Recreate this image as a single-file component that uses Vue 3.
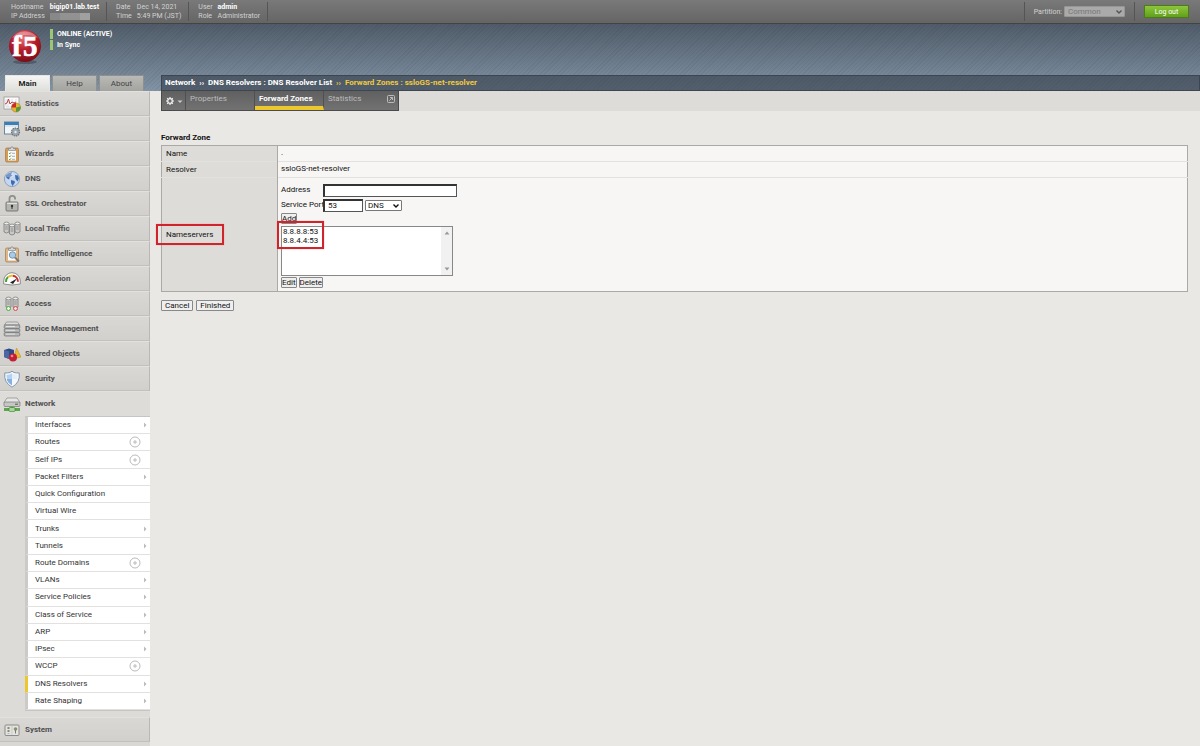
<template>
    <div class="page">
        <div class="top-bar">
            <dl class="info">
                <dt>Hostname</dt>
                <dd class="strong">bigip01.lab.test</dd>
                <dt>IP Address</dt>
                <dd class="masked"></dd>
            </dl>
            <dl class="info">
                <dt>Date</dt>
                <dd>Dec 14, 2021</dd>
                <dt>Time</dt>
                <dd>5:49 PM (JST)</dd>
            </dl>
            <dl class="info">
                <dt>User</dt>
                <dd class="strong">admin</dd>
                <dt>Role</dt>
                <dd>Administrator</dd>
            </dl>
            <div class="partition">
                <label for="partition">Partition:</label>
                <div class="picker">
                    <select id="partition" v-model="partition" disabled>
                        <option>Common</option>
                    </select>
                    <svg class="caret" viewBox="0 0 8 6"><path d="M1.5 1.5 4 4 6.5 1.5" /></svg>
                </div>
            </div>
            <div class="session">
                <button class="logout">Log out</button>
            </div>
        </div>

        <header class="banner">
            <div class="brand">
                <div class="identity">
                    <svg class="logo" viewBox="0 0 34 36">
                        <defs>
                            <radialGradient id="ball" cx="45%" cy="25%" r="75%">
                                <stop offset="0" stop-color="#e8707a" />
                                <stop offset="0.5" stop-color="#b81e2c" />
                                <stop offset="1" stop-color="#7c0c18" />
                            </radialGradient>
                        </defs>
                        <ellipse cx="17" cy="33" rx="12" ry="2" fill="#3d4854" opacity="0.6" />
                        <circle cx="17" cy="17" r="16" fill="url(#ball)" />
                        <path d="M4 9a16 16 0 0 1 26 0q-13-6-26 0z" fill="#fff" opacity="0.35" />
                        <text x="4" y="27">f</text>
                        <text x="15" y="27">5</text>
                    </svg>
                    <div class="status">
                        <span>ONLINE (ACTIVE)</span>
                        <span>In Sync</span>
                    </div>
                </div>
                <div class="side-tabs">
                    <button v-for="tab in sideTabs" :key="tab" :class="{ current: tab === sideTab }"
                        @click="sideTab = tab">{{ tab }}</button>
                </div>
            </div>
            <nav class="breadcrumb">
                <a href="#">Network</a>
                <i>››</i>
                <a href="#">DNS Resolvers : DNS Resolver List</a>
                <i class="here">››</i>
                <span class="here">Forward Zones : ssloGS-net-resolver</span>
            </nav>
        </header>

        <div class="body">
            <nav class="sidebar">
                <template v-for="item in menu" :key="item.name">
                    <a href="#" class="menu-item" :class="{ open: item.name === 'Network', last: item.name === 'System' }">
                        <svg class="menu-icon" viewBox="0 0 18 18" v-html="item.icon"></svg>
                        {{ item.name }}
                    </a>
                    <ul v-if="item.name === 'Network'" class="submenu">
                        <li v-for="sub in networkMenu" :key="sub.name" :class="{ selected: sub.name === 'DNS Resolvers' }">
                            <a href="#">{{ sub.name }}</a>
                            <svg v-if="sub.mark === 'plus'" class="plus" viewBox="0 0 12 12">
                                <circle cx="6" cy="6" r="5" />
                                <path d="M4 6h4M6 4v4" />
                            </svg>
                            <svg v-else-if="sub.mark === 'more'" class="more" viewBox="0 0 4 6">
                                <path d="M1 0.5l2.5 2.5-2.5 2.5z" />
                            </svg>
                        </li>
                    </ul>
                </template>
                <div class="sidebar-end"></div>
            </nav>

            <main class="content">
                <div class="tab-strip">
                    <div class="tabs">
                        <button class="gear" aria-label="Options">
                            <svg viewBox="0 0 18 10">
                                <g stroke="#f2f2f2" fill="none">
                                    <circle cx="5" cy="5" r="2.3" stroke-width="1.3" />
                                    <path stroke-width="1.2"
                                        d="M5 1v1.4M5 7.6V9M1 5h1.4M7.6 5H9M2.2 2.2l1 1M6.8 6.8l1 1M2.2 7.8l1-1M6.8 3.2l1-1" />
                                </g>
                                <path d="M12.5 4.5h5L15 7z" fill="#ccc" />
                            </svg>
                        </button>
                        <a href="#" class="tab">Properties</a>
                        <a href="#" class="tab active">Forward Zones</a>
                        <a href="#" class="tab stats">
                            Statistics
                            <svg viewBox="0 0 8 8">
                                <rect x="0.5" y="0.5" width="7" height="7" rx="1" />
                                <path d="M2.3 5.7l3-3M3 2.5h2.5V5" />
                            </svg>
                        </a>
                    </div>
                </div>

                <form class="zone" @submit.prevent>
                    <h1>Forward Zone</h1>
                    <table>
                        <tbody>
                            <tr>
                                <th scope="row">Name</th>
                                <td>.</td>
                            </tr>
                            <tr>
                                <th scope="row">Resolver</th>
                                <td>ssloGS-net-resolver</td>
                            </tr>
                            <tr>
                                <th scope="row">
                                    <span class="anchor">Nameservers<span class="highlight name-mark"></span></span>
                                </th>
                                <td class="servers">
                                    <div class="field">
                                        <label for="address">Address</label>
                                        <input id="address" v-model="address" type="text" class="address">
                                    </div>
                                    <div class="field">
                                        <label for="port">Service Port</label>
                                        <input id="port" v-model="port" type="text" class="port">
                                        <div class="picker service">
                                            <select v-model="service" aria-label="Service">
                                                <option>DNS</option>
                                            </select>
                                            <svg class="caret" viewBox="0 0 8 6"><path d="M1.5 1.5 4 4 6.5 1.5" /></svg>
                                        </div>
                                    </div>
                                    <div class="actions">
                                        <button type="button" @click="addServer">Add</button>
                                    </div>
                                    <div class="list-box">
                                        <select v-model="picked" multiple size="4" aria-label="Nameservers">
                                            <option v-for="server in servers" :key="server">{{ server }}</option>
                                        </select>
                                        <div class="scroll-track">
                                            <svg viewBox="0 0 6 4"><path d="M0.5 3.5l2.5-3 2.5 3z" /></svg>
                                            <svg viewBox="0 0 6 4"><path d="M0.5 0.5l2.5 3 2.5-3z" /></svg>
                                        </div>
                                        <span class="highlight server-mark"></span>
                                    </div>
                                    <div class="actions">
                                        <button type="button" @click="editServer">Edit</button>
                                        <button type="button" @click="deleteServers">Delete</button>
                                    </div>
                                </td>
                            </tr>
                        </tbody>
                    </table>
                    <div class="form-buttons">
                        <button type="button">Cancel</button>
                        <button type="submit">Finished</button>
                    </div>
                </form>
            </main>
        </div>
    </div>
</template>

<script setup>
import { ref } from "vue";

const partition = ref("Common");
const sideTabs = ["Main", "Help", "About"];
const sideTab = ref("Main");

const address = ref("");
const port = ref("53");
const service = ref("DNS");
const servers = ref(["8.8.8.8:53", "8.8.4.4:53"]);
const picked = ref([]);

const addServer = () => {
    if (!address.value) return;
    servers.value.push(`${address.value}:${port.value}`);
    address.value = "";
};

const deleteServers = () => {
    servers.value = servers.value.filter((s) => !picked.value.includes(s));
    picked.value = [];
};

const editServer = () => {
    if (!picked.value.length) return;
    [address.value, port.value] = picked.value[0].split(":");
    deleteServers();
};

// One server can, reused by the Local Traffic and Access icons
const can = (x, y) =>
    `<path d="M${x} ${y + 1.5}v8.5q2.5 2 5 0v-8.5" fill="#c9c9c7" stroke="#7b7b79" stroke-width=".8"/>
    <ellipse cx="${x + 2.5}" cy="${y + 1.5}" rx="2.5" ry="1.4" fill="#eee" stroke="#7b7b79" stroke-width=".8"/>
    <path d="M${x + 1.2} ${y + 5}h2.6M${x + 1.2} ${y + 7}h2.6" stroke="#777" stroke-width=".7"/>`;

const board = (stroke) =>
    `<rect x="2.5" y="3" width="13" height="14" rx="1.5" fill="${stroke}" stroke="#a07a4c" stroke-width=".7"/>
    <path d="M5 5h8v10.5H5z" fill="#fafafa"/>
    <path d="M5.5 5.5V3.5h2q1.5-4 3 0h2v2z" fill="#d5d5d5" stroke="#777" stroke-width=".6"/>`;

const menu = [
    {
        name: "Statistics",
        icon: `<rect x="1" y="2" width="15" height="12" fill="#fbfbfb" stroke="#999" stroke-width=".8"/>
            <path d="M3 4v8h11M5 12V4M9 12V4M13 12V4" stroke="#c9cdd2" stroke-width=".6" fill="none"/>
            <path d="M2 9l2-1 1.5-4 1.5 5 2-2 2 1 2-1" stroke="#b8424b" fill="none"/>
            <circle cx="13" cy="12.5" r="4.5" fill="#e2b82e" stroke="#8d732b" stroke-width=".5"/>
            <path d="M13 12.5V8a4.5 4.5 0 0 0-4.5 4.5z" fill="#c92c2c"/>
            <path d="M13 12.5l4.5-1a4.5 4.5 0 0 1-4.5 5.5z" fill="#57963b"/>`,
    },
    {
        name: "iApps",
        icon: `<rect x="1.5" y="2" width="14" height="12" fill="#f3f6f8" stroke="#617c94" stroke-width=".9"/>
            <path d="M1.5 2h14v3h-14z" fill="#3f7db5"/><path d="M2 6h13" stroke="#c5d2dd"/>
            <circle cx="12.5" cy="12" r="4" fill="#9aa6ab" stroke="#65747b" stroke-width="1.2" stroke-dasharray="1.4 .8"/>
            <circle cx="12.5" cy="12" r="1.2" fill="#e6e9ea"/>`,
    },
    {
        name: "Wizards",
        icon: `${board("#d69b54")}<path d="M6 8l.8.8L8 7.4M6 11l.8.8L8 10.4M6 14l.8.8L8 13.4" stroke="#4c9b31" fill="none"/>
            <path d="M9 8.3h3M9 11.3h3M9 14.3h3" stroke="#999" stroke-width=".8"/>`,
    },
    {
        name: "DNS",
        icon: `<circle cx="9" cy="9" r="7.6" fill="#c3d6f2" stroke="#7f95b8" stroke-width=".8"/>
            <path d="M3 5q3-3 6-2.5l-1 2 1.5 1-2.5 1.5-1 2.5-2.5-1.5zM8 10l3.5 1 .5 1.5-2.5 3.5-1.5-3zM12 5l3 .5 1 3-1.5 3-2-2.5z" fill="#416ca9"/>
            <ellipse cx="7" cy="5" rx="4" ry="2.5" fill="#fff" opacity=".3"/>`,
    },
    {
        name: "SSL Orchestrator",
        icon: `<path d="M6.5 8V4a2.8 2.8 0 0 1 5.6-.5v1" stroke="#8f8f8c" stroke-width="1.8" fill="none"/>
            <rect x="3" y="7" width="12" height="9" rx="1" fill="#b4b4b1" stroke="#666" stroke-width=".8"/>
            <path d="M4 8.3h10" stroke="#eee"/><circle cx="9" cy="11" r="1.2" fill="#333"/><path d="M9 11.5v2.5" stroke="#333"/>`,
    },
    { name: "Local Traffic", icon: can(1, 2) + can(12, 2) + can(6.5, 4) },
    {
        name: "Traffic Intelligence",
        icon: `${board("#dcb888")}<circle cx="9.5" cy="10" r="3.2" fill="#a9cbe6" stroke="#7b97ad"/>
            <path d="M12 12.5l4 4" stroke="#777" stroke-width="1.8"/>`,
    },
    {
        name: "Acceleration",
        icon: `<path d="M.7 14V11a8.3 8.3 0 0 1 16.6 0v3q-8.3 2-16.6 0z" fill="#fbfbfb" stroke="#777" stroke-width=".8"/>
            <path d="M3 12a6 6 0 0 1 2-5" stroke="#4b9b3b" stroke-width="2" fill="none"/>
            <path d="M5 7a6 6 0 0 1 5-1.2" stroke="#e3c22f" stroke-width="2" fill="none"/>
            <path d="M10 5.8a6 6 0 0 1 5 6" stroke="#c92c2c" stroke-width="2" fill="none"/>
            <path d="M7 12.5L14 8.5l-4 5.5z" fill="#222"/>`,
    },
    {
        name: "Access",
        icon: `${can(3, 2)}${can(10, 2)}<circle cx="5.5" cy="13.5" r="2" fill="#eaf5e6" stroke="#4da845"/>
            <circle cx="12.5" cy="13.5" r="2" fill="#f8e2e2" stroke="#d14848"/>`,
    },
    {
        name: "Device Management",
        icon: `<path d="M3.5 2h11l2 3h-15z" fill="#ddd" stroke="#777" stroke-width=".6"/>
            <rect x="1.2" y="5" width="15.6" height="3.4" rx="1" fill="#b9bbbb" stroke="#6c6c6c" stroke-width=".7"/>
            <rect x="1.2" y="8.8" width="15.6" height="3.4" rx="1" fill="#b9bbbb" stroke="#6c6c6c" stroke-width=".7"/>
            <rect x="1.2" y="12.6" width="15.6" height="3.4" rx="1" fill="#b9bbbb" stroke="#6c6c6c" stroke-width=".7"/>
            <path d="M3 6.5h9M3 10.3h9M3 14.1h9" stroke="#eee" stroke-width=".8"/>`,
    },
    {
        name: "Shared Objects",
        icon: `<path d="M13.5 3l4.5 9q-3 2-7 0z" fill="#e8b83c" stroke="#bd8c23" stroke-width=".5"/>
            <path d="M1 5l5-1.5L11 5v7l-5 2-5-2z" fill="#2f4a86"/><path d="M1 5l5 1.2v7.8l-5-2z" fill="#4a66a3"/>
            <circle cx="10" cy="12.5" r="4" fill="#c51f35"/><circle cx="9" cy="11" r="1.3" fill="#f08a93"/>`,
    },
    {
        name: "Security",
        icon: `<path d="M9 1.2l2 1.3q2.5.7 5.2.4Q17.5 12.5 9 17.2.5 12.5 1.8 2.9q2.7.3 5.2-.4z" fill="#f4f8fb" stroke="#8597a8"/>
            <path d="M9 3.2v12q-5.5-3-5.5-10.3 3 .2 5.5-1.7z" fill="#b4d1ee"/>
            <path d="M3.7 9H9v6.2q-4.5-2.5-5.3-6.2z" fill="#84b1df"/>
            <path d="M9 3.2q2.5 1.9 5.5 1.7 0 2-.6 4H9z" fill="#e3eef8"/>`,
    },
    {
        name: "Network",
        icon: `<path d="M4 3h10l3 4.5H1z" fill="#e6e6e4" stroke="#888" stroke-width=".7"/>
            <rect x="1" y="7" width="16" height="4.5" rx="1" fill="#c6c6c4" stroke="#777" stroke-width=".7"/>
            <path d="M12 9.2h3" stroke="#555"/>
            <path d="M1 14.5h16M9 11.5v3" stroke="#5aa64a" stroke-width="3"/>
            <rect x="6" y="12.5" width="6" height="4" rx="1" fill="#a5d898" stroke="#397c2c" stroke-width=".6"/>`,
    },
    {
        name: "System",
        icon: `<rect x="2" y="4" width="14" height="10.5" rx="1" fill="#e3e3df" stroke="#777" stroke-width=".8"/>
            <path d="M5.5 6v6.5" stroke="#8a8a72" stroke-width="2" stroke-dasharray="2 1"/>
            <path d="M9 5v8.5" stroke="#bbb" stroke-width=".7"/>
            <circle cx="12.5" cy="8" r="1.8" fill="#899169"/><path d="M12.5 9v3.5" stroke="#777"/>`,
    },
];

const networkMenu = [
    { name: "Interfaces", mark: "more" },
    { name: "Routes", mark: "plus" },
    { name: "Self IPs", mark: "plus" },
    { name: "Packet Filters", mark: "more" },
    { name: "Quick Configuration" },
    { name: "Virtual Wire" },
    { name: "Trunks", mark: "more" },
    { name: "Tunnels", mark: "more" },
    { name: "Route Domains", mark: "plus" },
    { name: "VLANs", mark: "more" },
    { name: "Service Policies", mark: "more" },
    { name: "Class of Service", mark: "more" },
    { name: "ARP", mark: "more" },
    { name: "IPsec", mark: "more" },
    { name: "WCCP", mark: "plus" },
    { name: "DNS Resolvers", mark: "more" },
    { name: "Rate Shaping", mark: "more" },
];
</script>

<style>
body {
    background: #e9e8e4;
}
</style>

<style scoped>
.page {
    min-height: 100vh;
    display: flex;
    flex-direction: column;
    font-family: Roboto, "Liberation Sans", Arial, sans-serif;
    font-size: 8px;
    line-height: 10px;
    color: #111;
}

.page * {
    box-sizing: border-box;
}

a {
    color: inherit;
    text-decoration: none;
}

button,
input,
select {
    margin: 0;
    font: inherit;
    color: inherit;
}

/* --- Top bar --- */
.top-bar {
    display: flex;
    height: 24px;
    background: linear-gradient(#797979, #656565);
    border-bottom: 1px solid #444;
    font-size: 7px;
    color: #d2d2d2;
}

.info {
    display: grid;
    grid-template-columns: auto auto;
    align-content: center;
    column-gap: 5px;
    line-height: 9px;
    margin: 2px 0;
    padding: 0 7px 0 9px;
    border-right: 1px solid #555;
}

.info:first-child {
    padding-left: 11px;
}

.info dd {
    margin: 0;
}

.info .strong {
    font-weight: bold;
    color: #fff;
}

.info .masked {
    width: 40px;
    height: 7px;
    align-self: center;
    background: linear-gradient(90deg, #888 25%, #929292 25% 75%, #a0a0a0 75%);
}

.partition,
.session {
    display: flex;
    align-items: center;
    gap: 2px;
    margin: 2px 0;
    padding: 0 9px;
    border-left: 1px solid #555;
}

.partition {
    margin-left: auto;
}

.session {
    padding-right: 11px;
}

.picker {
    position: relative;
    width: 61px;
    height: 11px;
}

.picker select {
    width: 100%;
    height: 100%;
    padding: 0 3px;
    appearance: none;
    background: #aaa;
    border: 1px solid #969696;
    border-radius: 1px;
    color: #777;
    font-size: 8px;
    line-height: 9px;
    opacity: 1;
}

.caret {
    position: absolute;
    right: 2px;
    top: 3px;
    width: 8px;
    height: 6px;
    fill: none;
    stroke: #555;
    stroke-width: 1.4;
    pointer-events: none;
}

.logout {
    width: 45px;
    height: 13px;
    padding: 0;
    background: linear-gradient(#8cc63a, #62a01a);
    border: 1px solid #4c7a1c;
    color: #fff;
    line-height: 10px;
}

/* --- Banner --- */
.banner {
    display: flex;
    align-items: flex-end;
    height: 67px;
    background:
        repeating-linear-gradient(135deg, rgba(0, 0, 0, 0.05) 0 1px, transparent 1px 3px),
        linear-gradient(#505c69, #8294a6);
}

.brand {
    display: flex;
    flex-direction: column;
    justify-content: space-between;
    width: 161px;
    height: 100%;
    padding-top: 5px;
}

.identity {
    display: flex;
    gap: 8px;
    padding-left: 8px;
}

.logo {
    width: 34px;
    height: 36px;
    overflow: visible;
}

.logo text {
    font-family: "Liberation Serif", serif;
    font-size: 29px;
    font-weight: bold;
    fill: #fff;
    stroke: #fff;
    stroke-width: 0.6;
}

.status {
    display: flex;
    flex-direction: column;
    gap: 1px;
    font-size: 7px;
    font-weight: bold;
    color: #fff;
}

.status span {
    padding-left: 4px;
    border-left: 3px solid #9bc774;
}

.side-tabs {
    display: flex;
    gap: 2px;
    padding-left: 5px;
}

.side-tabs button {
    width: 45px;
    height: 16px;
    padding: 0;
    border: 1px solid #8e908f;
    border-bottom: none;
    background: linear-gradient(#b9b9b6, #a3a39f);
    color: #444;
}

.side-tabs .current {
    background: linear-gradient(#f5f5f4, #dededa);
    border-color: #e6e6e4;
    font-weight: bold;
    color: #222;
}

.breadcrumb {
    flex: 1;
    display: flex;
    align-items: center;
    gap: 4px;
    height: 16px;
    padding-left: 3px;
    border: 1px solid #3d454f;
    background: rgba(52, 60, 72, 0.6);
    font-weight: bold;
    color: #fff;
}

.breadcrumb i {
    font-style: normal;
}

.breadcrumb .here {
    color: #f1ca3e;
}

/* --- Sidebar --- */
.body {
    flex: 1;
    display: flex;
}

.sidebar {
    display: flex;
    flex-direction: column;
    width: 150px;
    background: #dcdbd7;
}

.menu-item {
    display: flex;
    align-items: center;
    gap: 4px;
    height: 25px;
    padding-left: 3px;
    background: linear-gradient(#d9d8d4, #d1d0cc);
    border-top: 1px solid #e2e1de;
    border-right: 1px solid #b9b8b4;
    border-bottom: 1px solid #c2c1bd;
    font-weight: bold;
    color: #505050;
}

.menu-item.open {
    background: #dddcd8;
    border-right-color: #dddcd8;
    border-bottom: none;
}

.menu-item.last {
    margin-top: 6px;
}

.menu-icon {
    width: 18px;
    height: 18px;
}

.submenu {
    display: grid;
    grid-auto-rows: 1fr;
    min-height: 295px;
    margin: 0 0 0 25px;
    padding: 0;
    border-top: 1px solid #c6c5c2;
    border-bottom: 1px solid #c6c5c2;
    list-style: none;
    color: #333;
}

.submenu li {
    display: flex;
    align-items: center;
    justify-content: space-between;
    padding: 0 3px 0 7px;
    background: #fff;
    border-left: 3px solid #cbcac7;
    border-bottom: 1px solid #e2e1de;
}

.submenu .selected {
    border-left-color: #ecc72d;
}

.plus {
    width: 12px;
    height: 12px;
    margin-right: 6px;
    fill: none;
    stroke: #bbb;
}

.more {
    width: 4px;
    height: 6px;
    fill: #bbb;
}

.sidebar-end {
    flex: 1;
    margin-top: -1px;
    border-top: 1px solid #c2c1bd;
    background: #d9d8d4;
}

/* --- Content --- */
.content {
    flex: 1;
    min-width: 0;
}

.tab-strip {
    height: 20px;
    padding-left: 11px;
    background: linear-gradient(90deg, #e9e8e4 11px, #dddcd8 11px);
}

.tabs {
    display: inline-flex;
    height: 20px;
    border: 1px solid #4b4b4b;
    border-top: none;
    background: linear-gradient(#606060, #727272);
    color: #bdbdbd;
}

.gear {
    width: 24px;
    padding: 0 0 0 3px;
    border: none;
    border-right: 1px solid #505050;
    background: none;
}

.gear svg {
    display: block;
    width: 18px;
    height: 10px;
}

.tab {
    width: 69px;
    padding: 3px 4px 0;
    border-right: 1px solid #505050;
}

.tab.active {
    border-bottom: 4px solid #ecc72d;
    font-weight: bold;
    color: #fff;
}

.tab.stats {
    display: flex;
    justify-content: space-between;
    width: 74px;
    padding-right: 3px;
    border-right: none;
}

.stats svg {
    width: 8px;
    height: 8px;
    margin-top: 1px;
    fill: none;
    stroke: #c4c4c4;
    stroke-width: 0.9;
}

.zone {
    padding: 22px 12px 0 11px;
}

h1 {
    margin: 0 0 2px;
    font-size: 8px;
    line-height: 10px;
}

table {
    width: 100%;
    border-collapse: collapse;
    border: 1px solid #aaa9a6;
    background: #f7f6f4;
}

tr + tr {
    border-top: 1px solid #e2e1dd;
}

th {
    width: 116px;
    padding: 2px 4px;
    border-right: 1px solid #aaa9a6;
    background: #dddcd8;
    font-weight: normal;
    text-align: left;
}

td {
    padding: 2px 3px 3px;
}

.servers {
    padding: 5px 3px 3px;
}

.field {
    display: flex;
    align-items: center;
    height: 14px;
    margin-bottom: 1px;
}

.field label {
    width: 42px;
    white-space: nowrap;
}

.field input {
    height: 13px;
    padding: 0 4px;
    border: 1px solid #555;
    border-top: 2px solid #333;
    border-left: 2px solid #333;
    border-radius: 0;
    background: #fff;
}

.field .address {
    width: 134px;
}

.field .port {
    width: 40px;
    padding: 0 3px;
}

.service {
    width: 37px;
    margin-left: 2px;
}

.service select {
    padding: 0 2px;
    background: #fff;
    border-color: #777;
    color: #111;
}

.service .caret {
    stroke: #111;
}

.actions {
    display: flex;
    gap: 2px;
}

.actions button,
.form-buttons button {
    height: 11px;
    padding: 0;
    border: 1px solid #888;
    border-radius: 1px;
    background: #efefef;
    line-height: 9px;
}

.list-box {
    position: relative;
    display: flex;
    width: 172px;
    height: 50px;
    margin: 2px 0 1px;
    border: 1px solid #888;
    background: #fff;
}

.list-box select {
    flex: 1;
    padding: 0;
    border: none;
    outline: none;
    background: none;
    overflow: hidden;
}

.list-box option {
    min-height: 0;
    padding: 0 1px;
    line-height: 9px;
}

.scroll-track {
    display: flex;
    flex-direction: column;
    align-items: center;
    justify-content: space-between;
    width: 11px;
    padding: 4px 0;
    background: #f1f1f1;
}

.scroll-track svg {
    width: 6px;
    height: 4px;
    fill: #999;
}

.form-buttons {
    display: flex;
    gap: 3px;
    margin-top: 8px;
}

.form-buttons button {
    padding: 0 3px;
}

/* --- Red call-out frames --- */
.anchor {
    position: relative;
}

.highlight {
    position: absolute;
    border: 2px solid #d0242c;
    box-shadow: 0 0 1px #e98a8a;
    pointer-events: none;
}

.name-mark {
    inset: -6px -11px -6px -10px;
}

.server-mark {
    left: -5px;
    top: -6px;
    width: 47px;
    height: 28px;
}
</style>
